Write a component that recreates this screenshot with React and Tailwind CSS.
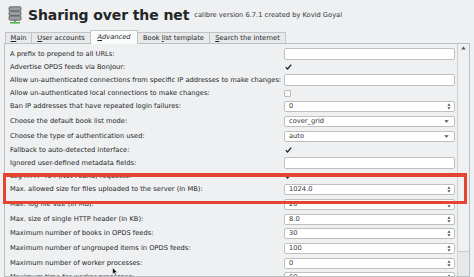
import React from 'react';

const rows = [
  { label: 'A prefix to prepend to all URLs:', type: 'text', h: 'h-[13px]' },
  { label: 'Advertise OPDS feeds via BonJour:', type: 'check', value: true, h: 'h-[13px]' },
  { label: 'Allow un-authenticated connections from specific IP addresses to make changes:', type: 'text', h: 'h-[13px]' },
  { label: 'Allow un-authenticated local connections to make changes:', type: 'check', value: false, h: 'h-[13px]' },
  { label: 'Ban IP addresses that have repeated login failures:', type: 'spin', value: '0', h: 'h-[14px]' },
  { label: 'Choose the default book list mode:', type: 'combo', value: 'cover_grid', h: 'h-[15px]' },
  { label: 'Choose the type of authentication used:', type: 'combo', value: 'auto', h: 'h-[15px]' },
  { label: 'Fallback to auto-detected interface:', type: 'check', value: true, h: 'h-[13px]' },
  { label: 'Ignored user-defined metadata fields:', type: 'text', h: 'h-[13px]' },
  { label: 'Log HTTP 404 (Not Found) requests:', type: 'check', value: true, h: 'h-[13px]' },
  { label: 'Max. allowed size for files uploaded to the server (in MB):', type: 'spin', value: '1024.0', h: 'h-[14px]' },
  { label: 'Max. log file size (in MB):', type: 'spin', value: '20', h: 'h-[15px]' },
  { label: 'Max. size of single HTTP header (in KB):', type: 'spin', value: '8.0', h: 'h-[15px]' },
  { label: 'Maximum number of books in OPDS feeds:', type: 'spin', value: '30', h: 'h-[14.5px]' },
  { label: 'Maximum number of ungrouped items in OPDS feeds:', type: 'spin', value: '100', h: 'h-[14.5px]' },
  { label: 'Maximum number of worker processes:', type: 'spin', value: '0', h: 'h-[15px]' },
  { label: 'Maximum time for worker processes:', type: 'spin', value: '60', h: 'h-[14.5px]' },
];

function Field({ type, value }) {
  if (type === 'check') {
    return value ? (
      <svg width="7" height="6" viewBox="0 0 7 6" className="ml-[1px]">
        <path d="M0.8 3.2 L2.6 5 L6.2 0.6" fill="none" stroke="#232627" strokeWidth="1.3" />
      </svg>
    ) : (
      <span className="block w-[7px] h-[7px] border border-[#b9bbbd] bg-[#fafafa] rounded-[1px]" />
    );
  }
  if (type === 'text') {
    return <div className="w-[171px] h-[12px] bg-white border border-[#bdbfc1] rounded-[2px]" />;
  }
  return (
    <div className="w-[171px] h-[11px] flex items-center justify-between pl-[4px] pr-[3px] bg-white border border-[#bdbfc1] rounded-[2px] text-[6.7px] leading-none text-[#31363b]">
      <span>{value}</span>
      {type === 'spin' ? (
        <svg width="4" height="7" viewBox="0 0 4 7">
          <path d="M2 0.5 L3.6 2.8 L0.4 2.8 Z M2 6.5 L3.6 4.2 L0.4 4.2 Z" fill="#4d5357" />
        </svg>
      ) : (
        <svg width="5" height="3" viewBox="0 0 5 3" className="mr-[2px]">
          <path d="M0.3 0.3 L4.7 0.3 L2.5 2.8 Z" fill="#4d5357" />
        </svg>
      )}
    </div>
  );
}

const tabs = [
  { pre: '', key: 'M', post: 'ain', w: 'w-[27px]' },
  { pre: '', key: 'U', post: 'ser accounts', w: 'w-[60px]' },
  { pre: '', key: 'A', post: 'dvanced', w: 'w-[48px]', active: true },
  { pre: 'Book ', key: 'l', post: 'ist template', w: 'w-[73px]' },
  { pre: '', key: 'S', post: 'earch the internet', w: 'w-[77px]' },
];

export default function App() {
  return (
    <div className="relative w-[474px] h-[277px] overflow-hidden bg-[#eff0f1] text-[#232627] font-['DejaVu_Sans',sans-serif]">
      {/* header */}
      <div className="flex items-center h-[29px] pl-[7px]">
        <svg width="18" height="18" viewBox="0 0 18 18">
          <rect x="2" y="0.8" width="12" height="4.2" rx="1.2" fill="#9a9ea1" stroke="#51575b" strokeWidth="0.8" />
          <rect x="2" y="5.4" width="12" height="4.2" rx="1.2" fill="#9a9ea1" stroke="#51575b" strokeWidth="0.8" />
          <rect x="2" y="10" width="12" height="4.2" rx="1.2" fill="#9a9ea1" stroke="#51575b" strokeWidth="0.8" />
          <rect x="7.4" y="14.2" width="1.2" height="2" fill="#51575b" />
          <rect x="3" y="16" width="10" height="1.6" fill="#4fb74e" />
        </svg>
        <h1 className="ml-[3px] text-[14px] font-bold leading-none tracking-[-0.1px]">Sharing over the net</h1>
        <span className="ml-[5px] mt-[2px] text-[6.7px] leading-none text-[#31363b]">calibre version 6.7.1 created by Kovid Goyal</span>
      </div>

      {/* tabs */}
      <div className="flex items-end h-[14px] pl-[5px]">
        {tabs.map((t, i) => (
          <div
            key={i}
            className={`${t.w} flex items-center justify-center border-l border-t border-r border-[#c1c3c4] text-[6.7px] leading-none whitespace-nowrap ${i > 0 ? '-ml-px' : ''} ${t.active ? 'relative z-10 h-[14px] -mb-px bg-[#fafbfb] italic' : 'h-[11px] bg-[#e7e9ea]'}`}
          >
            <span className="whitespace-pre">
              {t.pre}
              <u className="underline-offset-1">{t.key}</u>
              {t.post}
            </span>
          </div>
        ))}
      </div>

      {/* panel */}
      <div className="flex ml-[4px] w-[466px] h-[234px] border border-[#bcbebf] overflow-hidden">
        <div className="w-[452px] pt-[3.5px]">
          {rows.map((r, i) => (
            <div key={i} className={`${r.h} flex items-center`}>
              <div className="w-[279px] shrink-0 pl-[5px] text-[6.7px] leading-none whitespace-nowrap">{r.label}</div>
              <Field type={r.type} value={r.value} />
            </div>
          ))}
        </div>
        <div className="w-[12px] ml-[2px] border-l border-[#d0d2d3] flex flex-col items-center">
          <svg width="5" height="4" viewBox="0 0 5 4" className="mt-[2px]">
            <path d="M2.5 0.4 L4.7 3.4 L0.3 3.4 Z" fill="#4d5357" />
          </svg>
          <div className="mt-auto w-full h-[25px] border-t border-[#c9cbcc] bg-[#e6e8e9]" />
        </div>
      </div>

      {/* highlight */}
      <div className="absolute left-[3px] top-[173px] w-[464px] h-[31px] border-[3px] border-t-[4px] border-[#e5452f]" />

      {/* mouse cursor */}
      <svg className="absolute left-[112px] top-[267px]" width="6" height="9" viewBox="0 0 6 9">
        <path d="M0.5 0.5 L0.5 7.5 L2.2 5.8 L3.5 8.5 L4.5 8 L3.3 5.4 L5.5 5.4 Z" fill="#111" stroke="#fff" strokeWidth="0.6" />
      </svg>
    </div>
  );
}
